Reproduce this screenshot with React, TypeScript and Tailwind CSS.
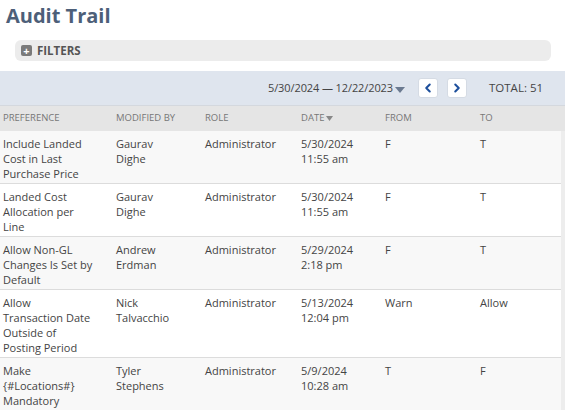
import { ChevronLeft, ChevronRight } from "lucide-react";

type Row = {
  pref: string[];
  by: string[];
  role: string;
  date: string[];
  from: string;
  to: string;
};

const rows: Row[] = [
  {
    pref: ["Include Landed", "Cost in Last", "Purchase Price"],
    by: ["Gaurav", "Dighe"],
    role: "Administrator",
    date: ["5/30/2024", "11:55 am"],
    from: "F",
    to: "T",
  },
  {
    pref: ["Landed Cost", "Allocation per", "Line"],
    by: ["Gaurav", "Dighe"],
    role: "Administrator",
    date: ["5/30/2024", "11:55 am"],
    from: "F",
    to: "T",
  },
  {
    pref: ["Allow Non-GL", "Changes Is Set by", "Default"],
    by: ["Andrew", "Erdman"],
    role: "Administrator",
    date: ["5/29/2024", "2:18 pm"],
    from: "F",
    to: "T",
  },
  {
    pref: ["Allow", "Transaction Date", "Outside of", "Posting Period"],
    by: ["Nick", "Talvacchio"],
    role: "Administrator",
    date: ["5/13/2024", "12:04 pm"],
    from: "Warn",
    to: "Allow",
  },
  {
    pref: ["Make", "{#Locations#}", "Mandatory"],
    by: ["Tyler", "Stephens"],
    role: "Administrator",
    date: ["5/9/2024", "10:28 am"],
    from: "T",
    to: "F",
  },
];

function Lines({ lines }: { lines: string[] }) {
  return (
    <>
      {lines.map((l) => (
        <div key={l} className="whitespace-nowrap">
          {l}
        </div>
      ))}
    </>
  );
}

export default function App() {
  return (
    <div
      className="h-[410px] w-[565px] overflow-hidden bg-white text-[#444]"
      style={{ fontFamily: '"Open Sans", "Liberation Sans", sans-serif' }}
    >
      <h1 className="px-[6px] pt-[1px] text-[20px] font-bold leading-[30px] text-[#4d5f79]">Audit Trail</h1>

      <div className="mx-[15px] mt-[9px] flex h-[21px] w-[536px] items-center gap-[5px] rounded-md bg-[#ececec] px-[6px]">
        <span className="flex h-[11px] w-[11px] items-center justify-center rounded-[2px] bg-[#7a7a7a] text-[11px] font-bold leading-none text-white">
          +
        </span>
        <span className="text-[11.5px] font-bold text-[#555]">FILTERS</span>
      </div>

      <div className="mt-[10px] flex h-[34px] items-center bg-[#dfe5ee] text-[11px]">
        <div className="ml-[268px] flex items-center gap-[2px]">
          <span className="tracking-[-0.1px]">5/30/2024 — 12/22/2023</span>
          <svg width="10" height="6" viewBox="0 0 10 6" className="mt-[3px]">
            <path d="M0 0h10L5 6z" fill="#6b7a90" />
          </svg>
        </div>
        <div className="ml-[13px] flex gap-[9px]">
          <button className="flex h-[20px] w-[20px] items-center justify-center rounded-[3px] border border-[#d5dbe4] bg-white">
            <ChevronLeft className="h-[14px] w-[14px] text-[#1d4f9c]" strokeWidth={3.5} />
          </button>
          <button className="flex h-[20px] w-[20px] items-center justify-center rounded-[3px] border border-[#d5dbe4] bg-white">
            <ChevronRight className="h-[14px] w-[14px] text-[#1d4f9c]" strokeWidth={3.5} />
          </button>
        </div>
        <span className="ml-[22px] text-[11.5px] text-[#444]">TOTAL: 51</span>
      </div>

      <div className="grid h-[26px] grid-cols-[113px_89px_96px_84px_95px_88px] items-center border-t border-[#d4d8de] bg-[#e5e5e5] text-[9.5px] text-[#777]">
        <span className="pl-[3px]">PREFERENCE</span>
        <span className="pl-[3px]">MODIFIED BY</span>
        <span className="pl-[3px]">ROLE</span>
        <span className="flex items-center gap-[2px] pl-[3px]">
          DATE
          <svg width="7" height="5" viewBox="0 0 7 5">
            <path d="M0 0h7L3.5 5z" fill="#888" />
          </svg>
        </span>
        <span className="pl-[3px]">FROM</span>
        <span className="pl-[3px]">TO</span>
      </div>

      <div className="flex">
        <div className="w-[561px]">
          {rows.map((r, i) => (
            <div
              key={r.pref.join(" ")}
              className={`grid grid-cols-[113px_89px_96px_84px_95px_84px] border-b border-[#dcdcdc] pt-[5px] pb-[2px] text-[11px] leading-[15px] ${
                i % 2 === 0 ? "bg-[#f8f8f8]" : "bg-white"
              }`}
            >
              <div className="pl-[3px]">
                <Lines lines={r.pref} />
              </div>
              <div className="pl-[3px]">
                <Lines lines={r.by} />
              </div>
              <div className="pl-[3px]">{r.role}</div>
              <div className="pl-[3px]">
                <Lines lines={r.date} />
              </div>
              <div className="pl-[3px]">{r.from}</div>
              <div className="pl-[3px]">{r.to}</div>
            </div>
          ))}
        </div>
        <div className="h-[300px] w-[4px] bg-[#ededed]" />
      </div>
    </div>
  );
}
